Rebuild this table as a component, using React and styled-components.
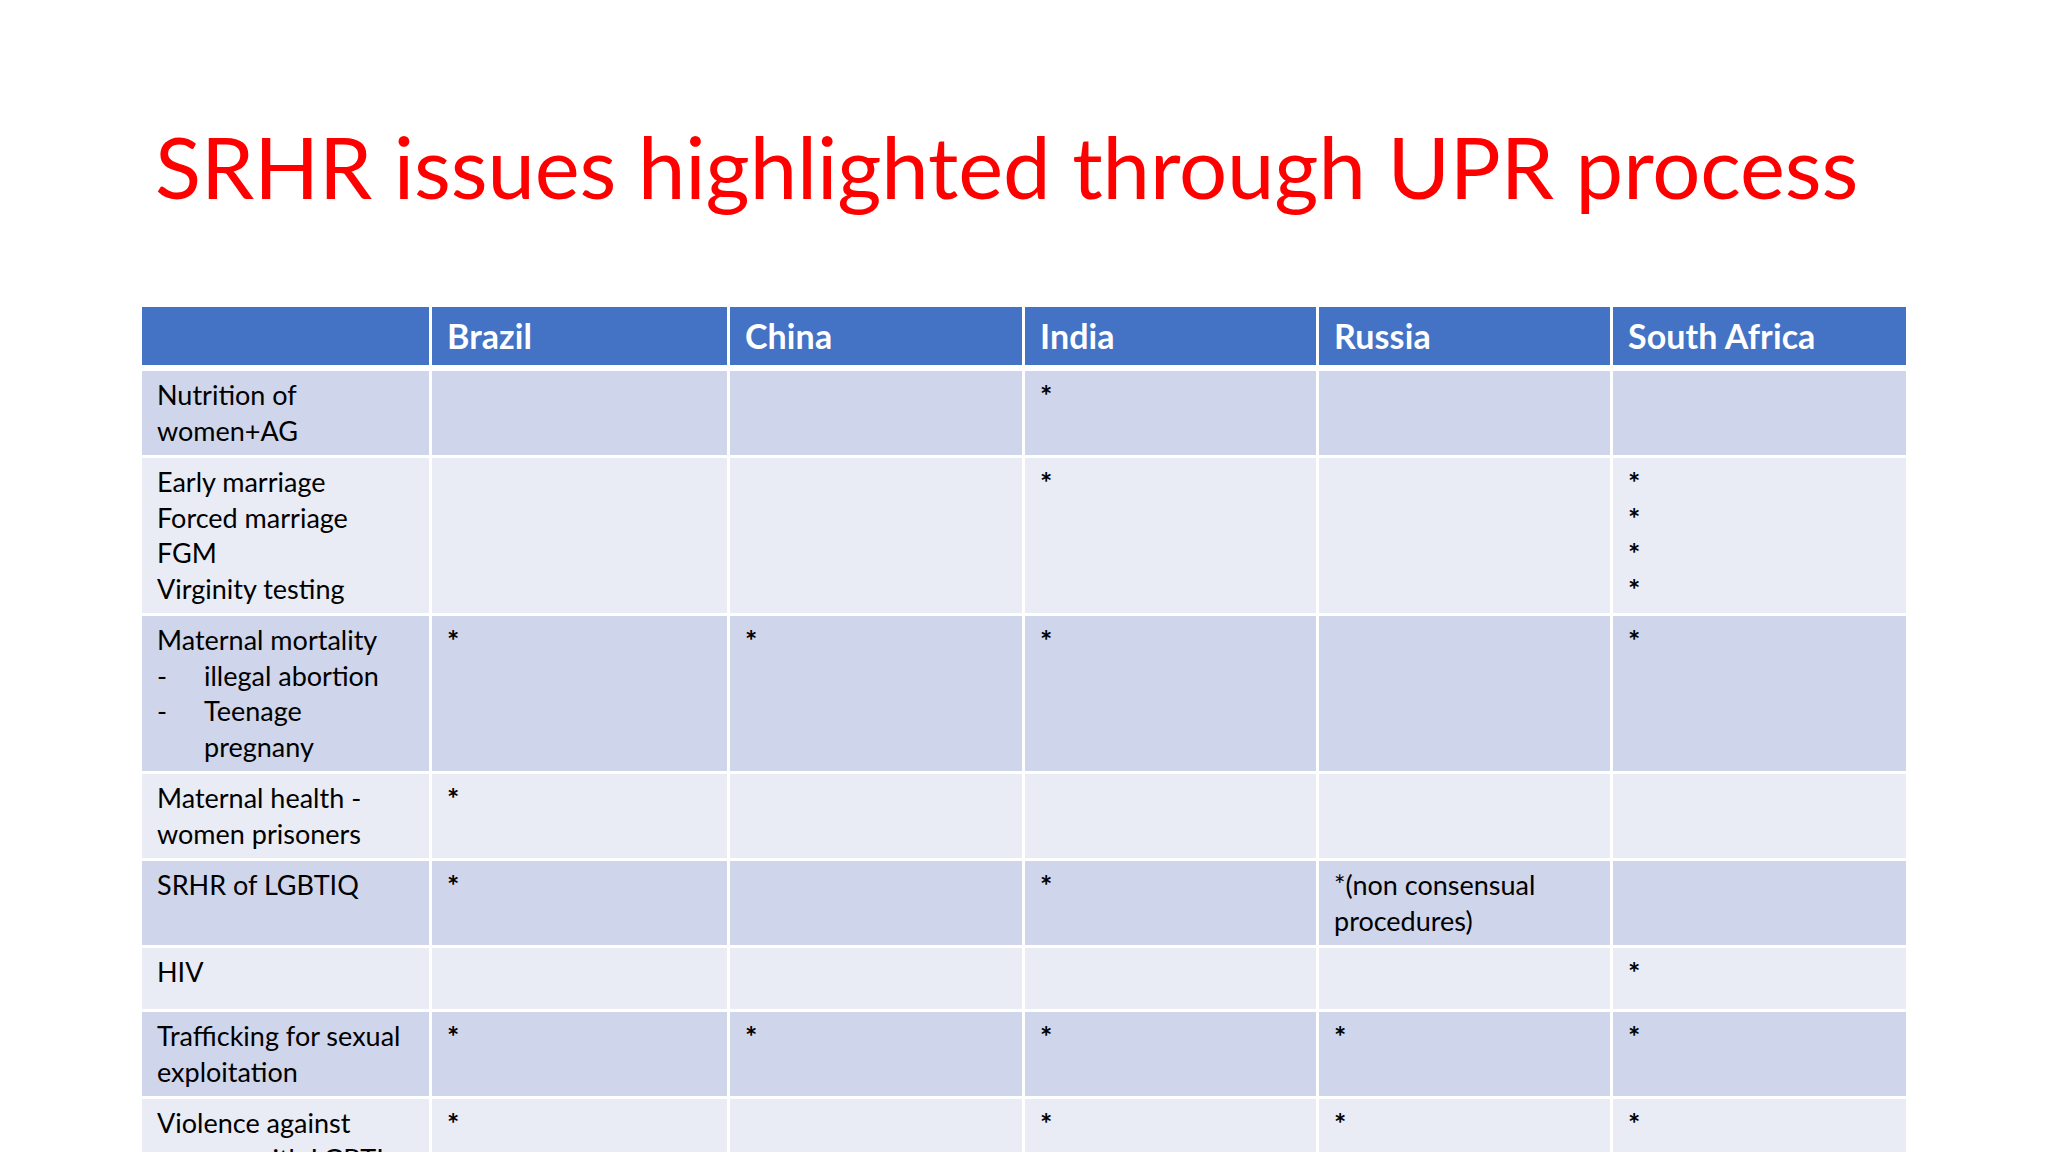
import styled, { createGlobalStyle } from "styled-components";

const GlobalStyle = createGlobalStyle`
  html, body {
    margin: 0;
    padding: 0;
    background: #ffffff;
  }
  body {
    font-family: Lato, "Open Sans", "Liberation Sans", sans-serif;
  }
`;

const Slide = styled.div`
  width: 2048px;
  height: 1152px;
  overflow: hidden;
  background: #ffffff;
  padding: 124px 0 0 0;
  box-sizing: border-box;
`;

const Title = styled.h1`
  margin: 0 0 0 155px;
  font-size: 85px;
  line-height: 85px;
  font-weight: 400;
  color: #ff0000;
  letter-spacing: -0.1px;
  white-space: nowrap;
`;

const Table = styled.div`
  margin: 98px 0 0 142px;
  width: 1764px;
  display: flex;
  flex-direction: column;
  gap: 3px;
`;

const Row = styled.div`
  display: grid;
  grid-template-columns: 287px 295px 292px 291px 291px 293px;
  column-gap: 3px;
  margin-bottom: ${({ $head }) => ($head ? "3px" : "0")};
`;

const HeadCell = styled.div`
  background: #4472c4;
  color: #ffffff;
  height: 58px;
  box-sizing: border-box;
  padding: 6px 15px 0;
  font-size: 34px;
  line-height: 45px;
  font-weight: 700;
  letter-spacing: 0.1px;
`;

const Cell = styled.div`
  background: ${({ $odd }) => ($odd ? "#cfd5ea" : "#e9ebf5")};
  color: #000000;
  box-sizing: border-box;
  min-height: ${({ $h }) => ($h ? `${$h}px` : "0")};
  padding: 6px 15px 7px;
  font-size: 27px;
  line-height: 35.5px;
`;

const Line = styled.div`
  display: flex;
  white-space: nowrap;
`;

const Dash = styled.span`
  width: 47px;
  flex: none;
`;

const Star = styled.div`
  font-size: 29px;
  font-weight: 700;
  line-height: 35.5px;
`;

const Note = styled.div`
  white-space: nowrap;
`;

const countries = ["Brazil", "China", "India", "Russia", "South Africa"];

const rows = [
  { label: [["Nutrition of"], ["women+AG"]], marks: ["", "", "*", "", ""] },
  {
    label: [["Early marriage"], ["Forced marriage"], ["FGM"], ["Virginity testing"]],
    marks: ["", "", "*", "", "*\n*\n*\n*"],
  },
  {
    label: [["Maternal mortality"], ["-", "illegal abortion"], ["-", "Teenage"], ["", "pregnany"]],
    marks: ["*", "*", "*", "", "*"],
  },
  { label: [["Maternal health -"], ["women prisoners"]], marks: ["*", "", "", "", ""] },
  { label: [["SRHR of LGBTIQ"]], h: 83, marks: ["*", "", "*", "*(non consensual\nprocedures)", ""] },
  { label: [["HIV"]], h: 61, marks: ["", "", "", "", "*"] },
  { label: [["Trafficking for sexual"], ["exploitation"]], marks: ["*", "*", "*", "*", "*"] },
  { label: [["Violence against"], ["women with LGBTI"]], marks: ["*", "", "*", "*", "*"] },
];

function Label({ lines }) {
  return lines.map((parts, i) =>
    parts.length > 1 ? (
      <Line key={i}>
        <Dash>{parts[0]}</Dash>
        {parts[1]}
      </Line>
    ) : (
      <Line key={i}>{parts[0]}</Line>
    )
  );
}

function Marks({ text }) {
  return text.split("\n").map((t, k) => {
    if (!t) return null;
    if (t === "*") return <Star key={k}>*</Star>;
    return <Note key={k}>{t}</Note>;
  });
}

export default function App() {
  return (
    <>
      <GlobalStyle />
      <Slide>
        <Title>SRHR issues highlighted through UPR process</Title>
        <Table>
          <Row $head>
            <HeadCell />
            {countries.map((c) => (
              <HeadCell key={c}>{c}</HeadCell>
            ))}
          </Row>
          {rows.map((r, i) => (
            <Row key={i}>
              <Cell $odd={i % 2 === 0} $h={r.h}>
                <Label lines={r.label} />
              </Cell>
              {r.marks.map((m, j) => (
                <Cell key={j} $odd={i % 2 === 0} $h={r.h}>
                  <Marks text={m} />
                </Cell>
              ))}
            </Row>
          ))}
        </Table>
      </Slide>
    </>
  );
}
